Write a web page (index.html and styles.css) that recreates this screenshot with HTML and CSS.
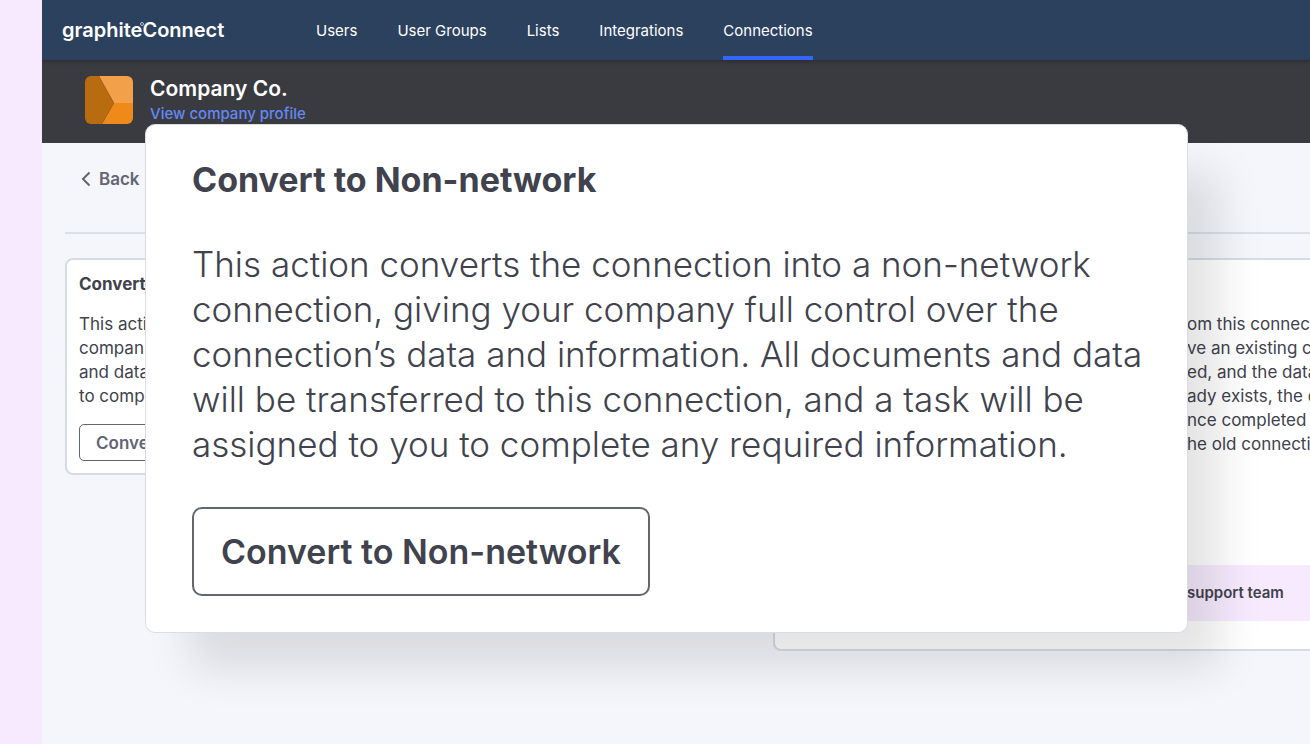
FILE: index.html
```html
<!DOCTYPE html>
<html lang="en">
<head>
<meta charset="utf-8">
<title>Connections</title>
<link rel="stylesheet" href="styles.css">
</head>
<body>
<div class="app">
  <header class="topbar">
    <a class="brand" href="#">graphite<svg class="brand-mark" viewBox="0 0 4 4" aria-hidden="true"><circle cx="2" cy="2" r="1.5"/></svg>Connect</a>
    <nav class="nav">
      <a class="nav-link" href="#">Users</a>
      <a class="nav-link" href="#">User Groups</a>
      <a class="nav-link" href="#">Lists</a>
      <a class="nav-link" href="#">Integrations</a>
      <a class="nav-link active" href="#" aria-current="page">Connections</a>
    </nav>
  </header>
  <section class="company">
    <svg class="company-logo" viewBox="0 0 48 48" aria-hidden="true">
      <path fill="#f2a14a" d="M14 0H48V27H29Z"/>
      <path fill="#ed8a19" d="M29 27H48V48H17Z"/>
      <path fill="#b96b10" d="M0 0H14L29 27L17 48H0Z"/>
    </svg>
    <div class="company-text">
      <h1 class="company-name">Company Co.</h1>
      <a class="company-link" href="#">View company profile</a>
    </div>
  </section>
  <main class="content">
    <div class="back-row">
      <button class="back" type="button">
        <svg class="chevron" viewBox="0 0 10 16" aria-hidden="true"><path d="M8.5 1.5L2 8L8.5 14.5"/></svg>Back
      </button>
    </div>
    <div class="cards">
      <article class="card">
        <h2 class="card-title">Convert</h2>
        <p class="card-text">This acti<br>compan<br>and data<br>to comp</p>
        <button class="card-button" type="button">Convert</button>
      </article>
      <article class="card card-merge">
        <p class="card-text merge-text">om this connec<br>ve an existing c<br>ed, and the data<br>ady exists, the d<br>nce completed<br>he old connecti</p>
        <p class="support">support team</p>
      </article>
    </div>
  </main>
</div>
<section class="dialog" role="dialog" aria-labelledby="dialog-title">
  <h2 class="dialog-title" id="dialog-title">Convert to Non-network</h2>
  <p class="dialog-text">This action converts the connection into a non-network<br>connection, giving your company full control over the<br>connection’s data and information. All documents and data<br>will be transferred to this connection, and a task will be<br>assigned to you to complete any required information.</p>
  <button class="dialog-button" type="button">Convert to Non-network</button>
</section>
</body>
</html>
```
FILE: styles.css
```css
* { box-sizing: border-box; }
html { height: 100%; }
body {
  position: relative;
  min-height: 100%;
  margin: 0;
  padding-left: 42px;
  display: flex;
  overflow: hidden;
  background: #f7eafe;
  color: #40424d;
  font-family: Inter, "Liberation Sans", sans-serif;
}
h1, h2, p { margin: 0; }
a { text-decoration: none; }
button { font-family: inherit; color: inherit; background: none; }

.app { flex: 1; min-width: 0; overflow: hidden; background: #f5f6fb; }

.topbar {
  position: relative;
  display: flex;
  height: 60px;
  padding-left: 20px;
  background: #2b415e;
  box-shadow: 0 1px 4px rgba(0, 0, 0, 0.3);
}
.brand {
  display: flex;
  width: 254px;
  line-height: 60px;
  font-size: 20px;
  font-weight: 600;
  color: #fff;
}
.brand-mark {
  width: 4px;
  height: 4px;
  margin: 22px -2px 0;
  fill: none;
  stroke: #b8c2d0;
}
.nav { display: flex; gap: 40px; }
.nav-link {
  line-height: 62px;
  height: 60px;
  font-size: 15px;
  color: #fff;
}
.nav-link.active { box-shadow: inset 0 -4px #3366ff; }

.company {
  display: flex;
  gap: 17px;
  height: 83px;
  padding: 16px 0 0 43px;
  background: #393b40;
}
.company-logo { width: 48px; height: 48px; border-radius: 6px; }
.company-name {
  line-height: 26px;
  font-size: 21px;
  font-weight: 600;
  color: #fff;
}
.company-link {
  display: block;
  line-height: 24px;
  font-size: 15px;
  font-weight: 500;
  color: #6488f5;
}

.content { padding-left: 23px; }
.back-row {
  height: 91px;
  padding: 24px 0 0 16px;
  border-bottom: 2px solid #dae0ea;
}
.back {
  display: flex;
  align-items: center;
  gap: 8px;
  padding: 0;
  border: 0;
  line-height: 24px;
  font-size: 17px;
  font-weight: 600;
  color: #636573;
}
.chevron {
  width: 10px;
  height: 16px;
  fill: none;
  stroke: #636573;
  stroke-width: 2;
}
.cards {
  display: grid;
  grid-template-columns: 1fr 1fr;
  align-items: start;
  gap: 24px;
  margin: 24px -147px 0 0;
}
.card {
  padding: 12px;
  border: 2px solid #d8dbe6;
  border-radius: 8px;
  background: #fff;
}
.card-title { line-height: 24px; font-size: 17px; font-weight: 700; }
.card-text { margin: 16px 0; line-height: 24px; font-size: 17px; }
.card-button {
  height: 37px;
  padding: 0 16px;
  border: 1px solid #636573;
  border-radius: 5px;
  font-size: 17px;
  font-weight: 600;
  color: #636573;
}
.card-merge {
  display: flex;
  flex-direction: column;
  justify-content: space-between;
  height: 393px;
  padding: 52px 0 28px;
}
.merge-text,
.support { padding-left: 412px; white-space: nowrap; }
.merge-text { margin: 0; }
.support {
  line-height: 56px;
  font-size: 15px;
  font-weight: 600;
  background: #f7eafe;
}

.dialog {
  position: absolute;
  top: 124px;
  left: 145px;
  right: 122px;
  padding: 32px 0 36px 46px;
  border: 1px solid #d9dce9;
  border-radius: 10px;
  background: #fff;
  box-shadow: 38px 42px 44px -6px rgba(0, 0, 0, 0.11);
}
.dialog-title { line-height: 46px; font-size: 34px; font-weight: 700; }
.dialog-text {
  margin: 39px 0 40px;
  line-height: 45px;
  font-size: 35px;
  font-weight: 300;
  white-space: nowrap;
}
.dialog-button {
  display: block;
  height: 89px;
  padding: 0 27px;
  border: 2px solid #636573;
  border-radius: 10px;
  font-size: 34px;
  font-weight: 600;
}
```
